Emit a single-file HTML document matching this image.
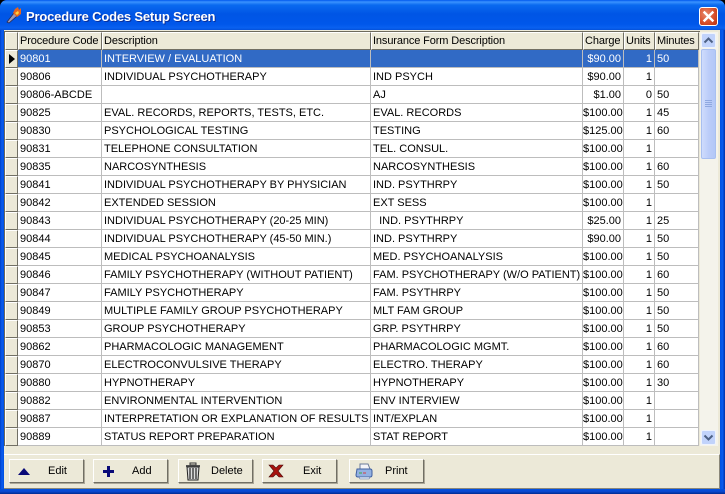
<!DOCTYPE html>
<html><head><meta charset="utf-8">
<style>
html,body{margin:0;padding:0;background:#000}
#win{position:relative;width:725px;height:494px;overflow:hidden;background:#0a4fe0;border-radius:7px 7px 0 0;font-family:"Liberation Sans",sans-serif;font-size:11px;color:#000}
#tb{position:absolute;left:0;top:0;width:725px;height:30px;border-radius:7px 7px 0 0;background:linear-gradient(180deg,#0058ee 0,#3a93ff 2px,#0a6af0 5px,#0055e5 14px,#0057ea 24px,#0a61f0 28px,#0350d8 30px)}
#bl{position:absolute;left:0;top:30px;width:4px;height:464px;background:linear-gradient(90deg,#0040c8,#0a5cf0 50%,#0050e0)}
#br{position:absolute;left:720px;top:30px;width:5px;height:464px;background:linear-gradient(90deg,#0050e0,#0a5cf0 50%,#0030a8)}
#bb{position:absolute;left:0;top:489px;width:725px;height:5px;background:linear-gradient(180deg,#0050e0,#0a48d0 50%,#002a90)}
#title{position:absolute;left:26px;top:9px;font:bold 13px "Liberation Sans",sans-serif;color:#fff;text-shadow:1px 1px 0 #0a2f9a;white-space:nowrap;letter-spacing:-.18px}
#close{position:absolute;left:699px;top:7px;width:19px;height:19px;box-sizing:border-box;border:1px solid #fff;border-radius:3px;background:radial-gradient(circle at 35% 35%,#e88a6d,#d8502c 55%,#b8300f)}
#client{position:absolute;left:4px;top:30px;width:716px;height:459px;background:#ece9d8}
#gridbox{position:absolute;left:4px;top:31px;width:696px;height:415px;background:#ece9d8;border-left:1px solid #6d6a5c;border-top:1px solid #6d6a5c;box-sizing:border-box;overflow:hidden}
table{position:absolute;left:0;top:0;border-collapse:separate;border-spacing:0;table-layout:fixed;width:694px}
td,th{box-sizing:border-box;padding:0 0 0 2px;margin:0;font:normal 11px "Liberation Sans",sans-serif;color:#000;white-space:nowrap;overflow:hidden;text-align:left;vertical-align:middle;border-right:1px solid #bdbdbd;border-bottom:1px solid #bdbdbd;background:#fff}
tr{height:18px}
th{background:#ece9d8;border-top:1px solid #fff;border-left:1px solid #fff;border-right:1px solid #716f64;border-bottom:1px solid #716f64;padding-left:1px;letter-spacing:-.12px}
td.rh{background:#ece9d8;border-top:1px solid #fff;border-left:1px solid #fff;border-right:1px solid #716f64;border-bottom:1px solid #716f64;padding:0;position:relative}
td.r{text-align:right;padding:0 2px 0 0}
tr.sel td:not(.rh){background:#316ac5;color:#fff}
.ar{position:absolute;left:3px;top:3px;width:0;height:0;border-left:6px solid #000;border-top:5px solid transparent;border-bottom:5px solid transparent}
#sb{position:absolute;left:700px;top:32px;width:18px;height:414px;background:#f4f3eb}
.sbtn{position:absolute;left:1px;width:15px;height:15px;box-sizing:border-box;border:1px solid #eef3fc;border-radius:2px;background:#c1d3fb}
#thumb{position:absolute;left:1px;top:17px;width:15px;height:110px;box-sizing:border-box;border:1px solid #a8bff0;border-radius:2px;background:linear-gradient(90deg,#cfdcfc,#bccdf9 50%,#b2c7f7)}
#panel{position:absolute;left:4px;top:454px;width:715px;height:33px;background:#ece9d8;border-top:1px solid #fff;border-right:1px solid #8a877a;border-bottom:1px solid #8a877a}
.b{position:absolute;top:459px;width:75px;height:24px;box-sizing:border-box;background:#ece9d8;border:1px solid;border-color:#fff #716f64 #716f64 #fff;box-shadow:1px 1px 0 #aca899;font:11px "Liberation Sans",sans-serif}
.b span{position:absolute;top:5px;white-space:nowrap}
.b svg{position:absolute;left:0;top:0}
</style></head><body>
<div id="win">
<div id="tb"></div><div id="bl"></div><div id="br"></div><div id="bb"></div>
<svg style="position:absolute;left:6px;top:7px" width="16" height="17" viewBox="0 0 16 17"><path d="M1 15L8 6l3 3-8 7z" fill="#9a97b8" stroke="#2c2b50" stroke-width=".8"/><path d="M7 6l4 4 4-3 0-6-2 2-1-3-3 2z" fill="#e8641c"/><path d="M9 6l2 2 2-2-1-2z" fill="#ffd23c"/></svg>
<div id="title">Procedure Codes Setup Screen</div>
<div id="close"><svg width="17" height="17" viewBox="0 0 17 17"><path d="M4.5 4.5L12.5 12.5M12.5 4.5L4.5 12.5" stroke="#fff" stroke-width="2.4" stroke-linecap="square"/></svg></div>
<div id="client"></div>
<div id="gridbox">
<table>
<colgroup><col style="width:13px"><col style="width:84px"><col style="width:269px"><col style="width:212px"><col style="width:41px"><col style="width:31px"><col style="width:44px"></colgroup>
<tr><th></th><th>Procedure Code</th><th>Description</th><th>Insurance Form Description</th><th>Charge</th><th>Units</th><th>Minutes</th></tr>
<tr class="sel"><td class="rh"><div class="ar"></div></td><td>90801</td><td>INTERVIEW / EVALUATION</td><td></td><td class="r">$90.00</td><td class="r">1</td><td>50</td></tr>
<tr><td class="rh"></td><td>90806</td><td>INDIVIDUAL PSYCHOTHERAPY</td><td>IND PSYCH</td><td class="r">$90.00</td><td class="r">1</td><td></td></tr>
<tr><td class="rh"></td><td>90806-ABCDE</td><td></td><td>AJ</td><td class="r">$1.00</td><td class="r">0</td><td>50</td></tr>
<tr><td class="rh"></td><td>90825</td><td>EVAL. RECORDS, REPORTS, TESTS, ETC.</td><td>EVAL. RECORDS</td><td class="r">$100.00</td><td class="r">1</td><td>45</td></tr>
<tr><td class="rh"></td><td>90830</td><td>PSYCHOLOGICAL TESTING</td><td>TESTING</td><td class="r">$125.00</td><td class="r">1</td><td>60</td></tr>
<tr><td class="rh"></td><td>90831</td><td>TELEPHONE CONSULTATION</td><td>TEL. CONSUL.</td><td class="r">$100.00</td><td class="r">1</td><td></td></tr>
<tr><td class="rh"></td><td>90835</td><td>NARCOSYNTHESIS</td><td>NARCOSYNTHESIS</td><td class="r">$100.00</td><td class="r">1</td><td>60</td></tr>
<tr><td class="rh"></td><td>90841</td><td>INDIVIDUAL PSYCHOTHERAPY BY PHYSICIAN</td><td>IND. PSYTHRPY</td><td class="r">$100.00</td><td class="r">1</td><td>50</td></tr>
<tr><td class="rh"></td><td>90842</td><td>EXTENDED SESSION</td><td>EXT SESS</td><td class="r">$100.00</td><td class="r">1</td><td></td></tr>
<tr><td class="rh"></td><td>90843</td><td>INDIVIDUAL PSYCHOTHERAPY (20-25 MIN)</td><td>&nbsp;&nbsp;IND. PSYTHRPY</td><td class="r">$25.00</td><td class="r">1</td><td>25</td></tr>
<tr><td class="rh"></td><td>90844</td><td>INDIVIDUAL PSYCHOTHERAPY (45-50 MIN.)</td><td>IND. PSYTHRPY</td><td class="r">$90.00</td><td class="r">1</td><td>50</td></tr>
<tr><td class="rh"></td><td>90845</td><td>MEDICAL PSYCHOANALYSIS</td><td>MED. PSYCHOANALYSIS</td><td class="r">$100.00</td><td class="r">1</td><td>50</td></tr>
<tr><td class="rh"></td><td>90846</td><td>FAMILY PSYCHOTHERAPY (WITHOUT PATIENT)</td><td>FAM. PSYCHOTHERAPY (W/O PATIENT)</td><td class="r">$100.00</td><td class="r">1</td><td>60</td></tr>
<tr><td class="rh"></td><td>90847</td><td>FAMILY PSYCHOTHERAPY</td><td>FAM. PSYTHRPY</td><td class="r">$100.00</td><td class="r">1</td><td>50</td></tr>
<tr><td class="rh"></td><td>90849</td><td>MULTIPLE FAMILY GROUP PSYCHOTHERAPY</td><td>MLT FAM GROUP</td><td class="r">$100.00</td><td class="r">1</td><td>50</td></tr>
<tr><td class="rh"></td><td>90853</td><td>GROUP PSYCHOTHERAPY</td><td>GRP. PSYTHRPY</td><td class="r">$100.00</td><td class="r">1</td><td>50</td></tr>
<tr><td class="rh"></td><td>90862</td><td>PHARMACOLOGIC MANAGEMENT</td><td>PHARMACOLOGIC MGMT.</td><td class="r">$100.00</td><td class="r">1</td><td>60</td></tr>
<tr><td class="rh"></td><td>90870</td><td>ELECTROCONVULSIVE THERAPY</td><td>ELECTRO. THERAPY</td><td class="r">$100.00</td><td class="r">1</td><td>60</td></tr>
<tr><td class="rh"></td><td>90880</td><td>HYPNOTHERAPY</td><td>HYPNOTHERAPY</td><td class="r">$100.00</td><td class="r">1</td><td>30</td></tr>
<tr><td class="rh"></td><td>90882</td><td>ENVIRONMENTAL INTERVENTION</td><td>ENV INTERVIEW</td><td class="r">$100.00</td><td class="r">1</td><td></td></tr>
<tr><td class="rh"></td><td>90887</td><td>INTERPRETATION OR EXPLANATION OF RESULTS</td><td>INT/EXPLAN</td><td class="r">$100.00</td><td class="r">1</td><td></td></tr>
<tr><td class="rh"></td><td>90889</td><td>STATUS REPORT PREPARATION</td><td>STAT REPORT</td><td class="r">$100.00</td><td class="r">1</td><td></td></tr>
</table>
</div>
<div id="sb">
<div class="sbtn" style="top:1px"><svg width="13" height="13" viewBox="0 0 13 13"><path d="M2.5 8.5l4-4 4 4" fill="none" stroke="#4d6185" stroke-width="2"/></svg></div>
<div id="thumb"><svg width="13" height="108" viewBox="0 0 13 108"><path d="M3 50.5h7M3 52.5h7M3 54.5h7M3 56.5h7" stroke="#8fa8e0"/></svg></div>
<div class="sbtn" style="top:398px"><svg width="13" height="13" viewBox="0 0 13 13"><path d="M2.5 4.5l4 4 4-4" fill="none" stroke="#4d6185" stroke-width="2"/></svg></div>
</div>
<div id="panel"></div>
<div class="b" style="left:9px"><svg width="30" height="22"><path d="M8 15l6-7 6 7z" fill="#0a0a78"/></svg><span style="left:38px">Edit</span></div>
<div class="b" style="left:93px"><svg width="30" height="22"><path d="M13 6h3v4h4v3h-4v4h-3v-4H9v-3h4z" fill="#0a0a78"/></svg><span style="left:38px">Add</span></div>
<div class="b" style="left:178px"><svg width="30" height="22" viewBox="0 0 30 22"><path d="M7 5h14v2H7z" fill="#555"/><path d="M11 3h6v2h-6z" fill="none" stroke="#333"/><path d="M8 7h12l-1 13H9z" fill="#ddd" stroke="#222"/><path d="M11 8v11M14 8v11M17 8v11" stroke="#222" stroke-width="1.2"/></svg><span style="left:32px">Delete</span></div>
<div class="b" style="left:262px"><svg width="30" height="22" viewBox="0 0 30 22"><path d="M6 5h4l3 3 3-3h4l-5 6 5 6h-4l-3-3-3 3H6l5-6z" fill="#a8140e" stroke="#4a0a08" stroke-width=".6"/></svg><span style="left:40px">Exit</span></div>
<div class="b" style="left:349px"><svg width="30" height="22" viewBox="0 0 30 22"><path d="M10 4h8l2 5h-10z" fill="#f4f4f8" stroke="#6a7a9a"/><path d="M7 9h13q2 0 2 2v4q0 2-2 2H8q-2 0-2-2z" fill="#93b1e2" stroke="#3f5f9f"/><path d="M9 13h3" stroke="#3cab3c"/><path d="M13 13h3" stroke="#d84040"/><path d="M9 17h11l-1 2H10z" fill="#dde6f6" stroke="#5a74a8" stroke-width=".6"/></svg><span style="left:35px">Print</span></div>
</div>
</body></html>
